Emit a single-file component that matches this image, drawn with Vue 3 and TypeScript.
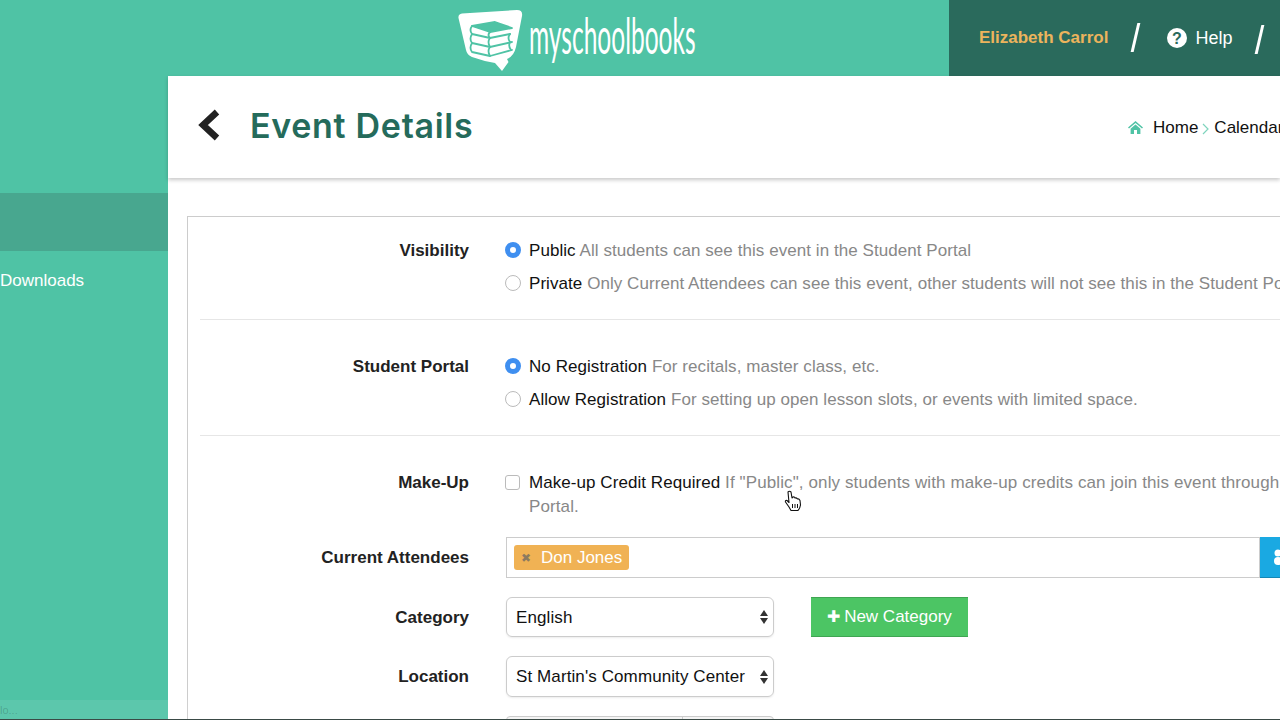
<script setup lang="ts">
interface Choice { label: string; hint: string; on: boolean }
const visibility: Choice[] = [
  { label: 'Public', hint: 'All students can see this event in the Student Portal', on: true },
  { label: 'Private', hint: 'Only Current Attendees can see this event, other students will not see this in the Student Portal', on: false },
]
const portal: Choice[] = [
  { label: 'No Registration', hint: 'For recitals, master class, etc.', on: true },
  { label: 'Allow Registration', hint: 'For setting up open lesson slots, or events with limited space.', on: false },
]
const sections = [
  { title: 'Visibility', items: visibility },
  { title: 'Student Portal', items: portal },
]
</script>

<template>
  <div class="app">
    <header class="top">
      <div class="brand">
        <svg class="logo" width="68" height="66" viewBox="0 0 68 66">
          <path d="M1.5 9 Q1 5 5 4.5 L60 1 Q66 1 65 7 L59 38 Q57 47 50 50 L51.5 53 L45 62 L38 54 Q26 52 15 48 Q10 46 9 41 Z" fill="#fff"/>
          <g fill="none" stroke="#4fc3a5" stroke-width="1.8" stroke-linejoin="round" stroke-linecap="round">
            <path d="M15 17 L38 13 L55 19 L33 23 Z" fill="#4fc3a5"/>
            <path d="M15 17 Q12 21 15 25 L33 29 L53 25"/>
            <path d="M15 25 Q12 30 15 34 L33 38 L55 33"/>
            <path d="M53 25 Q50 29 53 33"/>
            <path d="M15 34 Q12 39 15 43 L33 47 L55 41"/>
            <path d="M53 33 Q51 37 54 41"/>
            <path d="M33 23 Q30 26 33 29"/>
            <path d="M33 29 Q30 33 33 38"/>
            <path d="M33 38 Q30 42 33 47"/>
          </g>
        </svg>
        <span class="wordmark"><span class="wm-inner">myschoolbooks</span></span>
      </div>
      <div class="account">
        <span class="user">Elizabeth Carrol</span>
        <span class="slash one"></span>
        <svg class="help-icon" width="20" height="20" viewBox="0 0 20 20">
          <circle cx="10" cy="10" r="10" fill="#fff"/>
          <text x="10" y="15.5" text-anchor="middle" class="help-q">?</text>
        </svg>
        <span class="help">Help</span>
        <span class="slash two"></span>
      </div>
    </header>

    <div class="body">
      <aside class="side">
        <div class="side-active"></div>
        <div class="side-link">Downloads</div>
      </aside>

      <main class="main">
        <div class="head">
          <svg class="back" width="24" height="34" viewBox="0 0 24 34">
            <path d="M19 4 L5 17 L19 30" fill="none" stroke="#222" stroke-width="6.5"/>
          </svg>
          <h1 class="title">Event Details</h1>
          <nav class="crumbs">
            <svg class="home" width="15" height="13" viewBox="0 0 15 13">
              <path d="M7.5 0 L15 6.6 L14 7.6 L7.5 2 L1 7.6 L0 6.6 Z M2.6 7.8 L7.5 3.6 L12.4 7.8 V13 H9 V9 H6 V13 H2.6 Z" fill="#4fc3a5"/>
            </svg>
            <span class="crumb">Home</span>
            <svg class="sep" width="7" height="12" viewBox="0 0 7 12">
              <path d="M1 1 L6 6 L1 11" fill="none" stroke="#7fd4bd" stroke-width="1.2"/>
            </svg>
            <span class="crumb">Calendar</span>
          </nav>
        </div>

        <div class="form">
          <section v-for="s in sections" :key="s.title" class="section">
            <div class="label nudge">{{ s.title }}</div>
            <div class="choices">
              <div v-for="c in s.items" :key="c.label" class="choice">
                <span class="radio" :class="{ on: c.on }"></span>
                <span class="choice-text"><span class="strong">{{ c.label }}</span> <span class="hint">{{ c.hint }}</span></span>
              </div>
            </div>
          </section>

          <div class="makeup">
            <div class="label nudge">Make-Up</div>
            <div class="choice">
              <span class="check"></span>
              <span class="choice-text tight"><span class="strong">Make-up Credit Required</span> <span class="hint wide">If "Public", only students with make-up credits can join this event through the Student<br>Portal.</span></span>
            </div>
          </div>

          <div class="field tall attendee-row">
            <div class="label">Current Attendees</div>
            <div class="tagbox">
              <span class="tag"><span class="tag-x">✖</span>Don Jones</span>
            </div>
            <div class="add-btn">
              <svg width="20" height="18" viewBox="0 0 20 18">
                <circle cx="18" cy="5" r="3.5" fill="#fff"/>
                <circle cx="18" cy="13" r="4" fill="#fff"/>
              </svg>
            </div>
          </div>

          <div class="field">
            <div class="label nudge">Category</div>
            <div class="select">English<span class="arrows"></span></div>
            <div class="btn-new"><span class="plus">✚</span>New Category</div>
          </div>

          <div class="field tall">
            <div class="label">Location</div>
            <div class="select">St Martin's Community Center<span class="arrows"></span></div>
          </div>

          <div class="field">
            <div class="label"></div>
            <div class="split"><span class="split-a"></span><span class="split-b"></span></div>
          </div>
        </div>
      </main>
    </div>

    <svg class="cursor" width="18" height="22" viewBox="0 0 18 22">
      <path d="M4 2 Q5.5 .5 7 2 L8 8 L9 7 Q10.5 6.5 11 8 Q12.5 7.5 13.5 9 Q15 8.5 16 10.5 L16.5 15 Q16 18 14 20.5 H7 L5 17 L1.5 12 Q1 10 3 10.5 L5 12.5 Z" fill="#fff" stroke="#111" stroke-width="1.1" stroke-linejoin="round"/>
      <path d="M8.5 14 V18 M11 14 V18 M13.5 14 V18" stroke="#111" stroke-width="1"/>
    </svg>
    <div class="status"><span class="status-text">lo...</span></div>
    <div class="edge"></div>
  </div>
</template>

<style>
html, body { margin: 0; padding: 0; background: #fff; }
</style>

<style scoped>
.app {
  position: relative;
  width: 1280px;
  height: 720px;
  overflow: hidden;
  display: flex;
  flex-direction: column;
  font-family: "Liberation Sans", Arial, sans-serif;
  font-size: 17px;
  color: #111;
}
.top { height: 76px; flex: none; display: flex; background: #4fc3a5; }
.brand { flex: 1; display: flex; align-items: flex-start; padding-left: 457px; }
.logo { margin-top: 9px; flex: none; }
.wordmark { display: block; width: 166px; margin-left: 4px; height: 76px; }
.wm-inner {
  display: inline-block;
  font-family: Lato, sans-serif;
  font-weight: 400;
  font-size: 51px;
  line-height: 70px;
  color: #fff;
  transform: scaleX(0.481);
  transform-origin: left center;
  white-space: nowrap;
}
.account { width: 331px; flex: none; background: #2a6a5c; display: flex; align-items: center; padding-left: 30px; box-sizing: border-box; }
.user { color: #ecb45c; font-weight: 700; font-size: 17px; width: 129px; white-space: nowrap; }
.slash { width: 2.5px; height: 29px; background: #fff; transform: skewX(-13deg); flex: none; }
.slash.one { margin-left: 26px; margin-top: -1px; }
.slash.two { margin-left: 27px; margin-top: 2px; }
.help-icon { margin-left: 30px; flex: none; }
.help-q { font: 700 16px "Liberation Sans", Arial, sans-serif; fill: #2a6a5c; }
.help { color: #fff; margin-left: 9px; font-size: 18px; width: 35px; }

.body { flex: 1; display: flex; min-height: 0; }
.side { width: 168px; flex: none; background: #4fc3a5; padding-top: 117px; box-sizing: border-box; }
.side-active { height: 58px; background: #48a78f; }
.side-link { color: #fff; font-size: 17px; line-height: 60px; }

.main { flex: 1; min-width: 0; background: #fff; }
.head {
  height: 102px;
  display: flex;
  align-items: center;
  padding-left: 30px;
  box-shadow: 0 2px 4px rgba(0, 0, 0, .22);
  position: relative;
  white-space: nowrap;
}
.back { flex: none; margin-top: -4px; }
.title {
  margin: -3px 0 0 28px;
  font-family: Inter, sans-serif;
  font-weight: 600;
  font-size: 34px;
  letter-spacing: .7px;
  color: #256b5b;
  width: 878px;
  flex: none;
}
.crumbs { display: flex; align-items: center; flex: none; margin-top: 2px; }
.home { margin-right: 10px; margin-top: -2px; }
.crumb { font-size: 17px; }
.sep { margin: 1px 5px 0 4px; }

.form {
  margin: 38px 0 0 19px;
  border-left: 1px solid #ccc;
  border-top: 1px solid #ccc;
  padding-left: 12px;
  width: 1300px;
  white-space: nowrap;
  line-height: 24px;
  letter-spacing: .06px;
}
.section {
  display: grid;
  grid-template-columns: 269px 1fr;
  column-gap: 36px;
  padding: 21px 0 23px;
  border-bottom: 1px solid #e6e6e6;
}
.section + .section { padding-top: 34px; }
.label { font-weight: 700; text-align: right; color: #222; font-size: 17px; letter-spacing: 0; }
.label.nudge { padding-top: 1px; }
.choices { display: flex; flex-direction: column; gap: 8px; }
.choice { display: flex; align-items: flex-start; gap: 8px; }
.choice-text { padding-top: 1px; }
.choice-text.tight { margin-bottom: -1px; }
.strong { color: #111; }
.hint { color: #888; }
.hint.wide { letter-spacing: .11px; }
.radio {
  width: 16px;
  height: 16px;
  border-radius: 50%;
  border: 1px solid #bbb;
  background: #fff;
  flex: none;
  box-sizing: border-box;
  margin-top: 4px;
}
.radio.on {
  border: 5px solid #3f8ff0;
  background: #fff;
}
.check {
  width: 15px;
  height: 15px;
  border: 1px solid #bbb;
  border-radius: 3px;
  background: #fff;
  flex: none;
  box-sizing: border-box;
  margin: 5px 1px 0 0;
}
.makeup {
  display: grid;
  grid-template-columns: 269px 1fr;
  column-gap: 36px;
  padding-top: 34px;
}
.field {
  display: grid;
  grid-template-columns: 269px auto 1fr;
  column-gap: 37px;
  align-items: center;
  height: 40px;
  margin-top: 19px;
}
.field.tall { height: 41px; }
.attendee-row { display: flex; column-gap: 0; }
.attendee-row .label { width: 269px; flex: none; margin-right: 37px; }
.tagbox {
  width: 754px;
  height: 41px;
  flex: none;
  border: 1px solid #ccc;
  box-sizing: border-box;
  display: flex;
  align-items: center;
  padding-left: 7px;
}
.tag {
  background: #f0b254;
  color: #fff;
  border-radius: 3px;
  height: 25px;
  width: 115px;
  box-sizing: border-box;
  display: inline-flex;
  align-items: center;
  padding-left: 7px;
  font-size: 17px;
  letter-spacing: 0;
}
.tag-x { color: #8b7a60; font-size: 12px; width: 20px; flex: none; }
.add-btn {
  width: 60px;
  height: 41px;
  flex: none;
  background: #1aa9e2;
  display: flex;
  align-items: center;
  box-sizing: border-box;
  border-bottom: 1px solid #1587b5;
}
.select {
  width: 268px;
  height: 100%;
  box-sizing: border-box;
  border: 1px solid #ccc;
  border-radius: 6px;
  padding: 1px 0 0 9px;
  display: flex;
  align-items: center;
  position: relative;
  box-shadow: 0 1px 2px rgba(0, 0, 0, .08);
  letter-spacing: .1px;
}
.arrows {
  position: absolute;
  right: 5px;
  top: 50%;
  margin-top: -7px;
  width: 0;
  height: 0;
  border-left: 4px solid transparent;
  border-right: 4px solid transparent;
  border-bottom: 6px solid #333;
}
.arrows::after {
  content: "";
  position: absolute;
  left: -4px;
  top: 8px;
  width: 0;
  height: 0;
  border-left: 4px solid transparent;
  border-right: 4px solid transparent;
  border-top: 6px solid #333;
}
.btn-new {
  justify-self: start;
  width: 157px;
  height: 40px;
  background: #4cc564;
  border-bottom: 1px solid #3fa552;
  border-top: 1px solid #3fa552;
  box-sizing: border-box;
  color: #fff;
  display: flex;
  align-items: center;
  justify-content: center;
  gap: 4px;
  letter-spacing: 0;
}
.plus { font-size: 16px; }
.split {
  width: 268px;
  height: 40px;
  display: flex;
  box-sizing: border-box;
  border: 1px solid #ccc;
  border-radius: 4px 4px 0 0;
  background: #f4f4f4;
}
.split-a { width: 175px; border-right: 1px solid #ccc; flex: none; }
.split-b { flex: 1; }
.cursor { position: absolute; left: 784px; top: 490px; }
.status {
  position: absolute;
  left: 0;
  bottom: 1px;
  width: 381px;
  height: 19px;
  background: rgba(255, 255, 255, .08);
  overflow: hidden;
  font-size: 11px;
  line-height: 20px;
}
.status-text { color: rgba(0, 0, 0, .18); }
.edge { position: absolute; left: 0; right: 0; bottom: 0; height: 1px; background: #3a4a46; }
</style>
